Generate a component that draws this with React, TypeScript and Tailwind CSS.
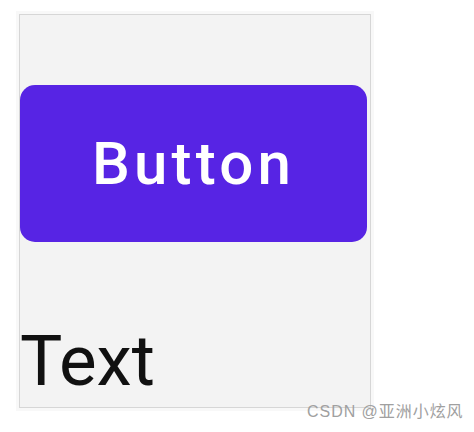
export default function App() {
  return (
    <div
      className="relative w-[474px] h-[432px] bg-white"
      style={{ fontFamily: "Roboto, 'Noto Sans', sans-serif" }}
    >
      <div className="pl-[16px] pt-[11px]">
        {/* preview frame */}
        <div className="w-[358px] h-[400px] bg-[#f8f8f8] p-[3px]">
          <div className="w-[352px] h-[394px] border border-[#d6d6d6] bg-[#f3f3f3] flex flex-col">
            <div className="h-[70px]" />
            <button className="w-[347px] h-[157px] rounded-[15px] bg-[#5724e4] text-white text-[60px] font-medium tracking-[0.07em] leading-none flex items-center justify-center">
              Button
            </button>
            <p className="mt-[83px] text-[71px] leading-none text-[#111]">
              Text
            </p>
          </div>
        </div>
      </div>
      <span
        className="absolute left-[307px] top-[404px] text-[16px] tracking-[0.06em] leading-none text-[#a0a0a0]"
        style={{ fontFamily: "'Liberation Sans', 'Noto Sans CJK SC', sans-serif" }}
      >
        CSDN @亚洲小炫风
      </span>
    </div>
  );
}
